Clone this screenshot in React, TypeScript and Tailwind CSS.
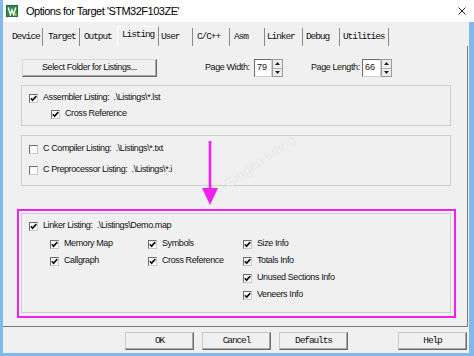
const SANS = "font-['Liberation_Sans',Arial,sans-serif]";
const MONO = "font-['Liberation_Mono','Courier_New',monospace]";

const TABS = [
  { label: "Device", cls: "w-[36px] pl-[5px] border-r-[#8a8a8a]" },
  { label: "Target", cls: "w-[37px] pl-[5px] border-r-[#8a8a8a]" },
  { label: "Output", cls: "w-[37px] pl-[4px] border-r-transparent" },
  { label: "Listing", cls: "w-[42px] pl-[4px] border-r-[#8a8a8a]", active: true },
  { label: "User", cls: "w-[34px] pl-[2px] border-r-[#8a8a8a]" },
  { label: "C/C++", cls: "w-[37px] pl-[4px] border-r-[#8a8a8a]" },
  { label: "Asm", cls: "w-[35px] pl-[4px] border-r-[#8a8a8a]" },
  { label: "Linker", cls: "w-[38px] pl-[2px] border-r-[#8a8a8a]" },
  { label: "Debug", cls: "w-[37px] pl-[3px] border-r-[#8a8a8a]" },
  { label: "Utilities", cls: "w-[49px] pl-[3px] border-r-[#8a8a8a]" },
];

function Check({ checked }: { checked?: boolean }) {
  return (
    <span className="flex h-[9px] w-[9px] shrink-0 items-center justify-center border border-[#6d6d6d] border-r-[#c8c8c8] border-b-[#c8c8c8] bg-white">
      {checked && (
        <svg width="7" height="7" viewBox="0 0 7 7">
          <path d="M0.8 3.2 L2.6 5.2 L6.3 1.2" fill="none" stroke="#111" strokeWidth="1.7" />
        </svg>
      )}
    </span>
  );
}

function Option({ label, checked }: { label: string; checked?: boolean }) {
  return (
    <div className="flex h-[16px] items-center gap-[5px]">
      <Check checked={checked} />
      <span className={`${SANS} whitespace-pre text-[9px] tracking-[-0.4px] text-[#111]`}>{label}</span>
    </div>
  );
}

function Spinner() {
  return (
    <span className="flex h-[18px] w-[11px] flex-col border border-[#9a9a9a] bg-[#ececec]">
      <span className="flex flex-1 items-center justify-center border-b border-[#b0b0b0]">
        <svg width="5" height="3" viewBox="0 0 5 3">
          <path d="M0 3 L2.5 0 L5 3Z" fill="#222" />
        </svg>
      </span>
      <span className="flex flex-1 items-center justify-center">
        <svg width="5" height="3" viewBox="0 0 5 3">
          <path d="M0 0 L5 0 L2.5 3Z" fill="#222" />
        </svg>
      </span>
    </span>
  );
}

function NumberField({ value, width }: { value: string; width: string }) {
  return (
    <span
      className={`${SANS} ${width} flex h-[18px] items-center border border-[#6d6d6d] border-r-[#d0d0d0] border-b-[#d0d0d0] bg-white pl-[2px] text-[9px] text-[#111]`}
    >
      {value}
    </span>
  );
}

function DlgButton({ label }: { label: string }) {
  return (
    <button
      type="button"
      className={`${MONO} flex h-[18px] w-[69px] items-center justify-center border border-[#c9c9c9] border-r-[#6a6a6a] border-b-[#6a6a6a] bg-[#f0f0f0] text-[9.5px] tracking-[-1.1px] text-[#111] shadow-[inset_-1px_-1px_0_#a8a8a8]`}
    >
      {label}
    </button>
  );
}

export default function App() {
  return (
    <div className="flex h-[356px] w-[474px] flex-col bg-[#80b9ee] pb-[3px] pl-[3px]">
      {/* title bar */}
      <div className="flex h-[22px] shrink-0 items-center bg-white pl-[3px] pr-[8px]">
        <svg width="12" height="12" viewBox="0 0 12 12">
          <rect width="12" height="12" fill="#1d6b34" />
          <rect x="1" y="1" width="10" height="10" fill="#2f8a45" />
          <path d="M2.2 2.5 L4.4 9.5 L6 4.8 L7.6 9.5 L9.8 2.5" fill="none" stroke="#fff" strokeWidth="1.4" />
          <rect x="8.5" y="8.5" width="2" height="2" fill="#f2d13a" />
        </svg>
        <span className={`${SANS} ml-[8px] text-[11px] tracking-[-0.5px] text-black`}>
          Options for Target 'STM32F103ZE'
        </span>
        <svg className="ml-auto" width="8" height="8" viewBox="0 0 8 8">
          <path d="M0.5 0.5 L7.5 7.5 M7.5 0.5 L0.5 7.5" stroke="#222" strokeWidth="1" />
        </svg>
      </div>

      <div className="mr-[5px] flex flex-1 flex-col bg-[#f0f0f0]">
        {/* tabs */}
        <div className="flex h-[24px] items-end pl-[4px]">
          {TABS.map((t) => (
            <div
              key={t.label}
              className={`${MONO} ${t.cls} flex items-center border-r text-[9.5px] tracking-[-1.1px] text-[#111] ${
                t.active ? "h-[20px] border-l border-t border-l-white border-t-white pb-[2px]" : "h-[18px]"
              }`}
            >
              {t.label}
            </div>
          ))}
        </div>

        {/* panel */}
        <div className="relative mr-[1px] h-[281px] border-r border-b border-[#7a7a7a] pl-[14px] pt-[12px]">
          <div className="flex h-[20px] items-center">
            <button
              type="button"
              className={`${SANS} ml-[5px] flex h-[18px] w-[135px] items-center justify-center border border-[#d8d8d8] border-r-[#6a6a6a] border-b-[#6a6a6a] bg-[#f0f0f0] text-[9px] tracking-[-0.4px] text-[#111] shadow-[inset_-1px_-1px_0_#a8a8a8]`}
            >
              Select Folder for Listings...
            </button>
            <span className={`${SANS} ml-[48px] w-[49px] text-[9px] tracking-[-0.4px] text-[#111]`}>Page Width:</span>
            <NumberField value="79" width="w-[18px]" />
            <Spinner />
            <span className={`${SANS} ml-[28px] w-[51px] text-[9px] tracking-[-0.4px] text-[#111]`}>Page Length:</span>
            <NumberField value="66" width="w-[19px]" />
            <Spinner />
          </div>

          {/* assembler */}
          <div className="ml-[4px] mt-[7px] h-[41px] w-[430px] border border-[#cdcdcd] pl-[7px] pt-[4px]">
            <Option label="Assembler Listing:  .\Listings\*.lst" checked />
            <div className="pl-[22px]">
              <Option label="Cross Reference" checked />
            </div>
          </div>

          {/* compiler */}
          <div className="ml-[4px] mt-[9px] flex h-[51px] w-[430px] flex-col gap-[5px] border border-[#cdcdcd] pl-[7px] pt-[5px]">
            <Option label="C Compiler Listing:  .\Listings\*.txt" />
            <Option label="C Preprocessor Listing:  .\Listings\*.i" />
          </div>

          {/* linker, highlighted */}
          <div className="mt-[23px] h-[109px] w-[439px] border-2 border-[#f020f0] pl-[2px] pt-[2px]">
            <div className="h-[100px] w-[430px] border border-[#cdcdcd] pl-[7px] pt-[4px]">
              <Option label="Linker Listing:  .\Listings\Demo.map" checked />
              <div className="mt-[2px] grid grid-cols-[98px_95px_1fr] grid-rows-[17px_17px_17px_17px] pl-[21px]">
                <Option label="Memory Map" checked />
                <Option label="Symbols" checked />
                <Option label="Size Info" checked />
                <Option label="Callgraph" checked />
                <Option label="Cross Reference" checked />
                <Option label="Totals Info" checked />
                <div />
                <div />
                <Option label="Unused Sections Info" checked />
                <div />
                <div />
                <Option label="Veneers Info" checked />
              </div>
            </div>
          </div>

          {/* pointer arrow */}
          <svg className="absolute left-[197px] top-[93px]" width="20" height="70" viewBox="0 0 20 70">
            <path d="M10 2 L10 52" stroke="#f020f0" strokeWidth="2.6" />
            <path d="M2 49 L18 49 L10 66Z" fill="#f020f0" />
          </svg>

          {/* faint watermark */}
          <span className={`${SANS} pointer-events-none absolute left-[215px] top-[105px] -rotate-[35deg] text-[14px] text-[#e8e8e8]`}>
            GingerHuang
          </span>
        </div>

        {/* footer buttons */}
        <div className="mt-[5px] flex pl-[122px]">
          <DlgButton label="OK" />
          <div className="ml-[8px]">
            <DlgButton label="Cancel" />
          </div>
          <div className="ml-[8px]">
            <DlgButton label="Defaults" />
          </div>
          <div className="ml-[50px]">
            <DlgButton label="Help" />
          </div>
        </div>
      </div>
    </div>
  );
}
